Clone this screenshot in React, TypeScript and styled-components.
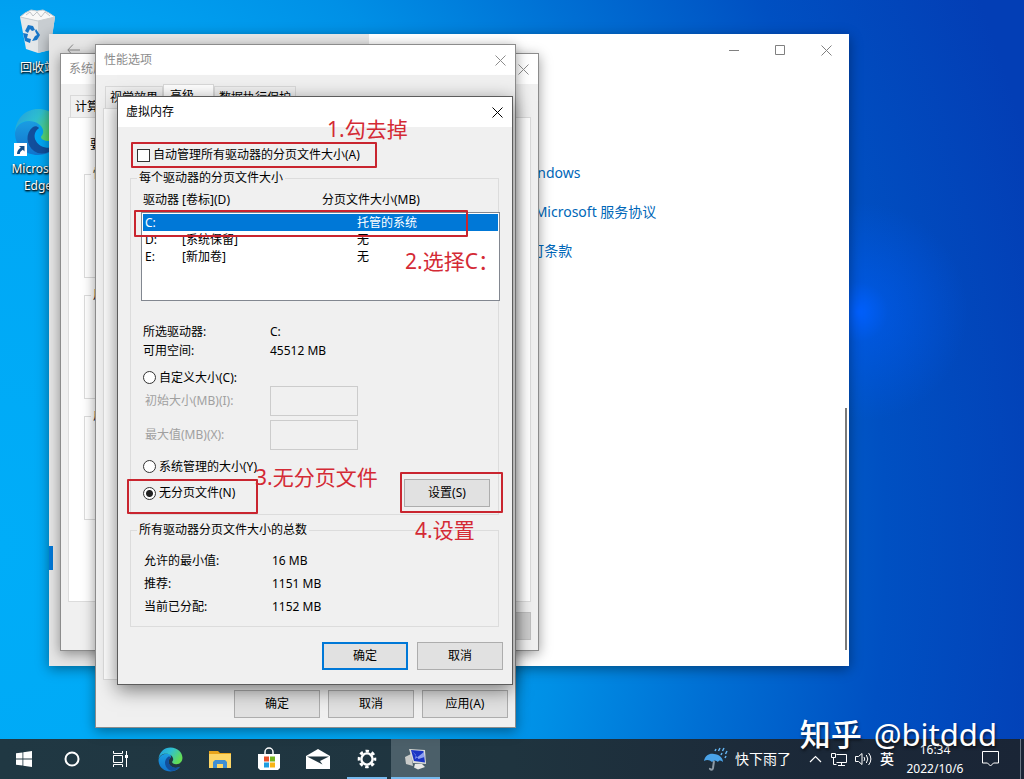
import React from "react";
import styled, { createGlobalStyle, css } from "styled-components";

const GlobalStyle = createGlobalStyle`
  * { box-sizing: border-box; }
  body {
    margin: 0;
    overflow: hidden;
    font: 12px/16px "Noto Sans", "Noto Sans CJK SC", sans-serif;
    color: #000;
  }
  button, input { font: inherit; color: inherit; }
`;

/* ---------- desktop ---------- */

const Screen = styled.div`
  display: flex;
  flex-direction: column;
  height: 100vh;
  background:
    radial-gradient(circle at 858px 312px, #0060ff 0, rgba(0, 96, 255, 0.4) 30px, rgba(0, 96, 255, 0) 110px),
    radial-gradient(ellipse 1080px 1300px at 0% 70%, #00adf8 0, #00a6f4 38%, #0090e6 52%, #0070d4 66%, #0050c2 82%, #033eb5 100%);
`;

const Desktop = styled.main`
  position: relative;
  flex: 1;
  min-height: 0;
`;

const Shortcuts = styled.nav`
  display: flex;
  flex-direction: column;
  gap: 32px;
  width: 76px;
  padding-top: 9px;
`;

const Shortcut = styled.a`
  display: flex;
  flex-direction: column;
  align-items: center;
  gap: 4px;
  color: #fff;
  line-height: 17px;
  text-align: center;
  text-decoration: none;
  text-shadow: 0 1px 2px #000, 1px 1px 2px #000;
`;

const Watermark = styled.div`
  position: absolute;
  right: 27px;
  bottom: -15px;
  z-index: 6;
  display: flex;
  gap: 12px;
  color: #fff;
  font-size: 31px;
  line-height: 40px;
  text-shadow: 1px 2px 3px rgba(0, 0, 0, 0.6);
`;

const WatermarkSite = styled.span`
  font-weight: 500;
`;

/* ---------- windows ---------- */

const Win = styled.section<{ $x: number; $y: number; $w: number; $active?: boolean }>`
  position: absolute;
  left: ${(p) => p.$x}px;
  top: ${(p) => p.$y}px;
  width: ${(p) => p.$w}px;
  border: 1px solid ${(p) => (p.$active ? "#5c5c5c" : "#8c8c8c")};
  background: #f0f0f0;
  box-shadow: ${(p) =>
    p.$active ? "0 5px 18px rgba(0, 0, 0, 0.5)" : "0 3px 12px rgba(0, 0, 0, 0.4)"};
`;

const SettingsWin = styled(Win)`
  display: flex;
  height: 632px;
  border: 0;
  background: #fff;
`;

const Sidebar = styled.aside`
  display: flex;
  flex-direction: column;
  justify-content: space-between;
  width: 320px;
  padding: 8px 0 96px;
  background: #e6e6e6;
`;

const SelectedMark = styled.div`
  width: 4px;
  height: 24px;
  background: #0078d7;
`;

const BackButton = styled.button`
  width: 48px;
  height: 16px;
  padding: 0;
  border: 0;
  background: none;
  color: #888;
  line-height: 0;
`;

const SettingsMain = styled.div`
  display: flex;
  flex: 1;
  flex-direction: column;
`;

const Controls = styled.div`
  display: flex;
  justify-content: flex-end;
`;

const ControlButton = styled.button`
  display: grid;
  place-items: center;
  width: 46px;
  height: 32px;
  padding: 0;
  border: 0;
  background: none;
  color: #808080;
`;

const SettingsBody = styled.div`
  display: flex;
  flex: 1;
  justify-content: space-between;
  align-items: flex-end;
  padding: 0 2px 16px 22px;
`;

const Links = styled.div`
  display: flex;
  flex-direction: column;
  align-self: flex-start;
  gap: 19px;
  padding-top: 97px;
  font-size: 14px;
  line-height: 20px;
`;

const TextLink = styled.a`
  color: #0067b8;
  text-decoration: none;
`;

const ScrollThumb = styled.div`
  width: 2px;
  height: 242px;
  background: #7a7a7a;
`;

const TitleBar = styled.header<{ $muted?: boolean }>`
  display: flex;
  align-items: center;
  justify-content: space-between;
  height: 30px;
  padding-left: 8px;
  background: #fff;
  color: ${(p) => (p.$muted ? "#8c8c8c" : "#000")};
`;

const Title = styled.h2`
  margin: 0;
  font-size: 12px;
  font-weight: 400;
`;

const CloseButton = styled.button`
  display: grid;
  place-items: center;
  width: 30px;
  height: 28px;
  padding: 0;
  border: 0;
  background: none;
`;

const Tabs = styled.div`
  display: flex;
  align-items: flex-end;
  height: 33px;
  padding-left: 9px;
`;

const Tab = styled.button<{ $active?: boolean }>`
  height: 22px;
  padding: 0 4px;
  border: 1px solid #d9d9d9;
  border-bottom: 0;
  background: #f0f0f0;
  white-space: nowrap;
  ${(p) =>
    p.$active &&
    css`
      height: 24px;
      padding: 0 12px 2px 6px;
      width: 51px;
      text-align: left;
      background: #fff;
    `}
`;

const TabPage = styled.div<{ $h: number }>`
  min-height: ${(p) => p.$h}px;
  margin: 0 7px;
  padding: 19px 15px 0;
  border: 1px solid #dcdcdc;
  background: #fff;
`;

const Paragraph = styled.p`
  margin: 0 0 13px;
  padding-left: 6px;
`;

const Groups = styled.div`
  display: flex;
  flex-direction: column;
  gap: 9px;
`;

const Group = styled.fieldset<{ $h?: number }>`
  min-width: 0;
  height: ${(p) => (p.$h ? p.$h + "px" : "auto")};
  margin: 0;
  padding: 0;
  border: 1px solid #dcdcdc;
`;

const Legend = styled.legend`
  margin-left: 6px;
  padding: 0 2px;
`;

const Buttons = styled.footer<{ $gap: number; $pad: string }>`
  display: flex;
  justify-content: flex-end;
  gap: ${(p) => p.$gap}px;
  padding: ${(p) => p.$pad};
`;

const Button = styled.button<{ $primary?: boolean }>`
  width: 86px;
  height: 28px;
  padding: 0;
  border: ${(p) => (p.$primary ? "2px solid #0078d7" : "1px solid #adadad")};
  background: #e1e1e1;
  &:disabled {
    border-color: #bfbfbf;
    background: #ccc;
    color: #838383;
  }
`;

/* ---------- virtual memory dialog ---------- */

const DialogBody = styled.div`
  display: flex;
  flex-direction: column;
  padding: 15px 13px 0 12px;
`;

const CheckLabel = styled.label`
  display: flex;
  align-items: center;
  gap: 3px;
  height: 26px;
  margin-bottom: 2px;
  padding-left: 7px;
`;

const CheckBox = styled.input`
  appearance: none;
  width: 13px;
  height: 13px;
  margin: 0;
  border: 1px solid #333;
  background: #fff;
`;

const Radio = styled.input`
  appearance: none;
  width: 13px;
  height: 13px;
  margin: 0;
  border: 1px solid #333;
  border-radius: 50%;
  background: #fff;
  &:checked {
    background: radial-gradient(circle, #222 3px, #fff 4px);
  }
`;

const ListHeader = styled.div`
  display: grid;
  grid-template-columns: 179px 1fr;
  padding: 6px 0 4px 12px;
`;

const ListBox = styled.div`
  height: 89px;
  margin: 0 -2px 0 10px;
  padding: 1px;
  border: 1px solid #828790;
  background: #fff;
`;

const DriveTable = styled.table`
  width: 100%;
  table-layout: fixed;
  border-collapse: collapse;
`;

const DriveRow = styled.tr<{ $selected?: boolean }>`
  height: 17px;
  background: ${(p) => (p.$selected ? "#0078d7" : "transparent")};
  color: ${(p) => (p.$selected ? "#fff" : "#000")};
`;

const DriveCell = styled.td<{ $w?: number }>`
  width: ${(p) => (p.$w ? p.$w + "px" : "auto")};
  padding: 0 0 0 2px;
`;

const Facts = styled.dl<{ $row: number; $col: number; $pad: string }>`
  display: grid;
  grid-template-columns: ${(p) => p.$col}px 1fr;
  grid-auto-rows: ${(p) => p.$row}px;
  align-items: center;
  margin: 0;
  padding: ${(p) => p.$pad};
`;

const Value = styled.dd`
  margin: 0;
`;

const Choice = styled.label`
  display: flex;
  align-items: center;
  gap: 3px;
  height: 17px;
  padding-left: 12px;
`;

const SizeFields = styled.div`
  display: grid;
  grid-template-columns: 125px 88px;
  grid-auto-rows: 30px;
  align-items: center;
  row-gap: 4px;
  padding: 0 0 8px 14px;
  color: #a0a0a0;
`;

const SizeInput = styled.input`
  width: 88px;
  height: 30px;
  border: 1px solid #ccc;
  background: #f0f0f0;
`;

const SetRow = styled.div`
  display: flex;
  align-items: center;
  justify-content: space-between;
  padding: 4px 8px 7px 0;
`;

const Total = styled(Group)`
  margin-top: 7px;
`;

/* ---------- red annotations ---------- */

const MarkBox = styled.div<{ $x: number; $y: number; $w: number; $h: number }>`
  position: absolute;
  left: ${(p) => p.$x}px;
  top: ${(p) => p.$y}px;
  width: ${(p) => p.$w}px;
  height: ${(p) => p.$h}px;
  border: 2px solid #c9252f;
  border-radius: 1px;
  pointer-events: none;
`;

const MarkText = styled.div<{ $x: number; $y: number }>`
  position: absolute;
  left: ${(p) => p.$x}px;
  top: ${(p) => p.$y}px;
  color: #d42a35;
  font-size: 21px;
  line-height: 28px;
  white-space: nowrap;
`;

/* ---------- taskbar ---------- */

const Taskbar = styled.footer`
  display: flex;
  justify-content: space-between;
  height: 40px;
  background: linear-gradient(90deg, #203843, #1f343f 50%, #1b2838 80%, #1a2536);
  color: #fff;
`;

const TaskGroup = styled.div`
  display: flex;
  align-items: stretch;
`;

const SystemButtons = styled(TaskGroup)`
  margin-right: 2px;
`;

const TaskButton = styled.button<{ $open?: boolean; $active?: boolean }>`
  display: grid;
  place-items: center;
  width: 49px;
  padding: 0;
  border: 0;
  background: ${(p) => (p.$active ? "#4b5f69" : "none")};
  ${(p) =>
    p.$open &&
    css`
      background-image: linear-gradient(#76b9ed, #76b9ed);
      background-repeat: no-repeat;
      background-position: center bottom;
      background-size: ${p.$active ? "100%" : "40px"} 2px;
    `}
  ${SystemButtons} & {
    width: 48px;
  }
`;

const Weather = styled.button`
  display: flex;
  align-items: center;
  gap: 7px;
  padding: 0 12px 0 0;
  border: 0;
  background: none;
  font-size: 14px;
`;

const TrayButton = styled.button`
  display: grid;
  place-items: center;
  width: 24px;
  padding: 0;
  border: 0;
  background: none;
  font-size: 14px;
  font-weight: 500;
`;

const Clock = styled.time`
  display: flex;
  flex-direction: column;
  justify-content: space-between;
  width: 72px;
  padding: 3px 0 2px;
  text-align: center;
`;

const ActionCenter = styled.button`
  display: grid;
  place-items: center;
  width: 50px;
  margin-right: 3px;
  padding: 0 10px 0 0;
  border: 0;
  border-right: 1px solid #6c7784;
  background: none;
`;

/* ---------- drawings ---------- */

const Cross = () => (
  <svg width="11" height="11" viewBox="0 0 11 11" stroke="currentColor" fill="none">
    <path d="M.5 .5l10 10M10.5 .5l-10 10" />
  </svg>
);

const EdgeLogo = ({ size, id }: { size: number; id: string }) => (
  <svg width={size} height={size} viewBox="0 0 48 48">
    <defs>
      <linearGradient id={id + "a"} x1="0" y1="0" x2="1" y2=".5">
        <stop offset="0" stopColor="#1f9be0" />
        <stop offset=".5" stopColor="#2fc0d0" />
        <stop offset="1" stopColor="#63dd55" />
      </linearGradient>
      <linearGradient id={id + "b"} x1="0" y1="0" x2="0" y2="1">
        <stop offset="0" stopColor="#1b9de2" />
        <stop offset="1" stopColor="#1173cc" />
      </linearGradient>
    </defs>
    <path fill={`url(#${id}b)`} d="M24 14C13 10 2 16 1 25c0 13 10 22 23 22 8 0 15-4 18-9-7 4-16 2-20-4-3-5-2-11 3-14z" />
    <path fill="#124f9c" d="M19 19c-8 6-7 18 1 24 7 5 17 2 22-5-8 4-17 1-20-5-3-5-1-10 3-13-2-2-4-2-6-1z" />
    <path fill={`url(#${id}a)`} d="M1 24C2 10 12 1 24 1c14 0 23 10 23 20 0 8-6 12-12 12-5 0-8-2-8-4 0-1 3-3 2-7-1-5-7-9-14-9-8 0-13 5-14 11z" />
  </svg>
);

const BinIcon = () => (
  <svg width="40" height="46" viewBox="0 0 40 46">
    <path d="M2 8l18 4 17-4-5 33-12 3-12-4z" fill="#e4e7e9" />
    <path d="M20 12l17-4-5 33-12 3z" fill="#c8cdd1" />
    <path d="M2 8l5-4 6-3 6 1 6-1 6 3 6 4-17 4z" fill="#f8f8f8" stroke="#c9cdd0" />
    <path d="M8 6l4-3 3 4 4-4 4 5 4-5 5 4" fill="none" stroke="#bfc4c8" />
    <g fill="#1676c8">
      <path d="M7 22l3-6 5 1 2 4-3 1-2-2-2 4z" />
      <path d="M18 20l4 6-3 5-5 1 3-5 2-1-2-4z" />
      <path d="M5 24l5 1-1 4 4 1-1 4-5-2z" />
    </g>
  </svg>
);

const EdgeShortcutArt = styled.span`
  position: relative;
  display: block;
  width: 48px;
  height: 48px;
`;

const ShortcutArrow = styled.svg`
  position: absolute;
  left: 0;
  bottom: 0;
`;

const drives = [
  { letter: "C:", label: "", size: "托管的系统", selected: true },
  { letter: "D:", label: "[系统保留]", size: "无" },
  { letter: "E:", label: "[新加卷]", size: "无" },
];

function SettingsWindow() {
  return (
    <SettingsWin $x={49} $y={34} $w={800} aria-label="设置">
      <Sidebar>
        <BackButton aria-label="返回">
          <svg width="13" height="12" viewBox="0 0 13 12" fill="none" stroke="currentColor">
            <path d="M13 6H1M6 .5L.8 6 6 11.500" />
          </svg>
        </BackButton>
        <SelectedMark />
      </Sidebar>
      <SettingsMain>
        <Controls>
          <ControlButton aria-label="最小化">
            <svg width="10" height="11" viewBox="0 0 10 11" stroke="currentColor"><path d="M0 5.500h10" /></svg>
          </ControlButton>
          <ControlButton aria-label="最大化">
            <svg width="11" height="11" viewBox="0 0 11 11" stroke="currentColor" fill="none"><path d="M.5 .5h9v9H.5z" /></svg>
          </ControlButton>
          <ControlButton aria-label="关闭"><Cross /></ControlButton>
        </Controls>
        <SettingsBody>
          <Links>
            <TextLink href="#key">更改产品密钥或升级 Windows</TextLink>
            <TextLink href="#services">阅读适用于我们服务的 Microsoft 服务协议</TextLink>
            <TextLink href="#license">阅读 Microsoft 软件许可条款</TextLink>
          </Links>
          <ScrollThumb />
        </SettingsBody>
      </SettingsMain>
    </SettingsWin>
  );
}

function SystemProperties() {
  return (
    <Win $x={60} $y={53} $w={479} aria-label="系统属性">
      <TitleBar $muted>
        <Title>系统属性</Title>
        <CloseButton aria-label="关闭"><Cross /></CloseButton>
      </TitleBar>
      <Tabs>
        <Tab>计算机名</Tab>
      </Tabs>
      <TabPage $h={485}>
        <Paragraph>要进行大多数更改，你必须作为管理员登录。</Paragraph>
        <Groups>
          <Group $h={112}><Legend>性能</Legend></Group>
          <Group $h={112}><Legend>用户配置文件</Legend></Group>
          <Group $h={112}><Legend>启动和故障恢复</Legend></Group>
        </Groups>
      </TabPage>
      <Buttons $gap={8} $pad="10px 7px">
        <Button disabled>应用</Button>
      </Buttons>
    </Win>
  );
}

function PerformanceOptions() {
  return (
    <Win $x={95} $y={44} $w={421} aria-label="性能选项">
      <TitleBar $muted>
        <Title>性能选项</Title>
        <CloseButton aria-label="关闭"><Cross /></CloseButton>
      </TitleBar>
      <Tabs>
        <Tab>视觉效果</Tab>
        <Tab $active>高级</Tab>
        <Tab>数据执行保护</Tab>
      </Tabs>
      <TabPage $h={572} />
      <Buttons $gap={8} $pad="10px 7px 9px">
        <Button>确定</Button>
        <Button>取消</Button>
        <Button>应用(A)</Button>
      </Buttons>
    </Win>
  );
}

function VirtualMemory() {
  return (
    <Win $x={117} $y={96} $w={396} $active aria-label="虚拟内存">
      <TitleBar>
        <Title>虚拟内存</Title>
        <CloseButton aria-label="关闭"><Cross /></CloseButton>
      </TitleBar>
      <DialogBody>
        <CheckLabel>
          <CheckBox type="checkbox" />
          自动管理所有驱动器的分页文件大小(A)
        </CheckLabel>
        <Group>
          <Legend>每个驱动器的分页文件大小</Legend>
          <ListHeader>
            <span>驱动器 [卷标](D)</span>
            <span>分页文件大小(MB)</span>
          </ListHeader>
          <ListBox>
            <DriveTable>
              <tbody>
                {drives.map((d) => (
                  <DriveRow key={d.letter} $selected={d.selected}>
                    <DriveCell $w={37}>{d.letter}</DriveCell>
                    <DriveCell $w={175}>{d.label}</DriveCell>
                    <DriveCell>{d.size}</DriveCell>
                  </DriveRow>
                ))}
              </tbody>
            </DriveTable>
          </ListBox>
          <Facts $row={19} $col={127} $pad="21px 0 9px 12px">
            <dt>所选驱动器:</dt>
            <Value>C:</Value>
            <dt>可用空间:</dt>
            <Value>45512 MB</Value>
          </Facts>
          <Choice>
            <Radio type="radio" name="mode" />
            自定义大小(C):
          </Choice>
          <SizeFields>
            <label htmlFor="initial">初始大小(MB)(I):</label>
            <SizeInput id="initial" disabled />
            <label htmlFor="maximum">最大值(MB)(X):</label>
            <SizeInput id="maximum" disabled />
          </SizeFields>
          <Choice>
            <Radio type="radio" name="mode" />
            系统管理的大小(Y)
          </Choice>
          <SetRow>
            <Choice>
              <Radio type="radio" name="mode" defaultChecked />
              无分页文件(N)
            </Choice>
            <Button>设置(S)</Button>
          </SetRow>
        </Group>
        <Total>
          <Legend>所有驱动器分页文件大小的总数</Legend>
          <Facts $row={23} $col={128} $pad="11px 0 8px 13px">
            <dt>允许的最小值:</dt>
            <Value>16 MB</Value>
            <dt>推荐:</dt>
            <Value>1151 MB</Value>
            <dt>当前已分配:</dt>
            <Value>1152 MB</Value>
          </Facts>
        </Total>
      </DialogBody>
      <Buttons $gap={9} $pad="15px 9px 14px">
        <Button $primary>确定</Button>
        <Button>取消</Button>
      </Buttons>
    </Win>
  );
}

export default function App() {
  return (
    <Screen>
      <GlobalStyle />
      <Desktop>
        <Shortcuts>
          <Shortcut href="#bin">
            <BinIcon />
            <span>回收站</span>
          </Shortcut>
          <Shortcut href="#edge">
            <EdgeShortcutArt>
              <EdgeLogo size={48} id="desk" />
              <ShortcutArrow width="13" height="13" viewBox="0 0 13 13">
                <path d="M0 0h13v13H0z" fill="#fff" />
                <path d="M5 3h5.500v5.500L8.800 6.800C7 8 6 9 5.800 11H3c0-3 1.500-5 3.800-6.200z" fill="#14508c" />
              </ShortcutArrow>
            </EdgeShortcutArt>
            <span>Microsoft<br />Edge</span>
          </Shortcut>
        </Shortcuts>

        <SettingsWindow />
        <SystemProperties />
        <PerformanceOptions />
        <VirtualMemory />

        <MarkBox $x={131} $y={142} $w={246} $h={26} />
        <MarkBox $x={134} $y={210} $w={334} $h={27} />
        <MarkBox $x={127} $y={479} $w={131} $h={35} />
        <MarkBox $x={400} $y={472} $w={103} $h={41} />
        <MarkText $x={327} $y={115}>1.勾去掉</MarkText>
        <MarkText $x={405} $y={247}>2.选择C：</MarkText>
        <MarkText $x={255} $y={463}>3.无分页文件</MarkText>
        <MarkText $x={415} $y={516}>4.设置</MarkText>

        <Watermark>
          <WatermarkSite>知乎</WatermarkSite>
          <span>@bitddd</span>
        </Watermark>
      </Desktop>

      <Taskbar>
        <TaskGroup>
          <SystemButtons>
            <TaskButton aria-label="开始">
              <svg width="16" height="16" viewBox="0 0 16 16" fill="#fff">
                <path d="M0 2.300L6.500 1.400v6.200H0zM7.300 1.300L16 0v7.600H7.300zM0 8.400h6.500v6.200L0 13.700zM7.300 8.400H16V16l-8.700-1.300z" />
              </svg>
            </TaskButton>
            <TaskButton aria-label="搜索">
              <svg width="16" height="16" viewBox="0 0 16 16" fill="none" stroke="#fff" strokeWidth="2"><circle cx="8" cy="8" r="6.500" /></svg>
            </TaskButton>
            <TaskButton aria-label="任务视图">
              <svg width="17" height="16" viewBox="0 0 17 16" fill="none" stroke="#fff">
                <path d="M1.500 0v2.500h9V0M1.500 16v-2.500h9V16M1.500 4.500h9v7h-9zM14.500 0v16" />
                <path d="M13 4h3v3h-3z" fill="#fff" stroke="none" />
              </svg>
            </TaskButton>
          </SystemButtons>
          <TaskButton aria-label="Edge"><EdgeLogo size={25} id="bar" /></TaskButton>
          <TaskButton aria-label="文件资源管理器">
            <svg width="22" height="19" viewBox="0 0 22 19">
              <path d="M0 1h9l2 2h11v15H0z" fill="#e8a51c" />
              <path d="M0 4h22v14H0z" fill="#fcd667" />
              <path d="M4 18v-6l2-2h10l2 2v6h-4v-4H8v4z" fill="#3f8fd4" />
            </svg>
          </TaskButton>
          <TaskButton aria-label="Microsoft Store">
            <svg width="24" height="24" viewBox="0 0 24 24">
              <path d="M8 8V5a4 4 0 0 1 8 0v3" fill="none" stroke="#fff" strokeWidth="1.500" />
              <path d="M1 7h22v14l-2 2H3l-2-2z" fill="#fff" />
              <path d="M7 9.500h5v5H7z" fill="#e8502a" /><path d="M13 9.500h5v5h-5z" fill="#74b41e" />
              <path d="M7 15.500h5v5H7z" fill="#1f9de0" /><path d="M13 15.500h5v5h-5z" fill="#f8b516" />
            </svg>
          </TaskButton>
          <TaskButton aria-label="邮件">
            <svg width="24" height="20" viewBox="0 0 24 20">
              <path d="M0 7l12-7 12 7v13H0z" fill="#fff" />
              <path d="M1 7.500h22l-9 4.500 2.500 3.500z" fill="#20353f" />
            </svg>
          </TaskButton>
          <TaskButton $open aria-label="设置">
            <svg width="20" height="20" viewBox="0 0 20 20" fill="none" stroke="#fff">
              <circle cx="10" cy="10" r="5.600" strokeWidth="2.400" />
              <circle cx="10" cy="10" r="7.900" strokeWidth="2.800" strokeDasharray="3.400 2.805" strokeDashoffset="1.700" />
            </svg>
          </TaskButton>
          <TaskButton $open $active aria-label="系统属性">
            <svg width="24" height="22" viewBox="0 0 24 22">
              <path d="M1 9l6-3 2 12-7-2z" fill="#c9cbc9" />
              <path d="M5 1l16 1 1 14-13-1z" fill="#dcdcd8" />
              <path d="M7 2l12.500 1 1.500 11.500L10 13z" fill="#1b35c4" />
              <path d="M8 3l4 4-1 4 9-7 .5 5-6 2z" fill="#8ea0f0" />
              <path d="M11 16h7l3 3-7 2.500-4-2z" fill="#e9e9e6" />
            </svg>
          </TaskButton>
        </TaskGroup>

        <TaskGroup>
          <Weather>
            <svg width="25" height="24" viewBox="0 0 25 24" fill="none">
              <path d="M1 14C2 8 7 6 11 7c5 0 9 4 9 8-2-2-4-2-5 0-2-2-4-2-6 0-2-2-5-3-8-1z" fill="#4aa3e8" />
              <path d="M11 14l-1 7c-.5 2.500-3.500 2-3 0" stroke="#8d9aa6" strokeWidth="2" />
              <path d="M13 2l-1 2M17 1l-1.500 3M21 1l-1.500 3M24 4l-1.500 3M19 6l-1 2M23 9l-1 2" stroke="#64b5f2" strokeWidth="1.500" />
            </svg>
            快下雨了
          </Weather>
          <TrayButton aria-label="显示隐藏的图标">
            <svg width="13" height="8" viewBox="0 0 13 8" fill="none" stroke="#fff" strokeWidth="1.200"><path d="M1 7l5.500-5.500L12 7" /></svg>
          </TrayButton>
          <TrayButton aria-label="网络">
            <svg width="16" height="15" viewBox="0 0 16 15" fill="none" stroke="#fff">
              <path d="M5.500 2.500h10v8h-10M10.500 10.500v3M7 13.500h7M.5 1.500h4v4h-4zM2.500 5.500v7h3" />
            </svg>
          </TrayButton>
          <TrayButton aria-label="音量">
            <svg width="17" height="14" viewBox="0 0 17 14" fill="none" stroke="#fff">
              <path d="M.5 4.500h3L7 1.500v11L3.500 9.500h-3zM9 5q1.500 2 0 4M11.300 3q3 4 0 8M13.600 1q4.600 6 0 12" />
            </svg>
          </TrayButton>
          <TrayButton aria-label="输入法">英</TrayButton>
          <Clock>
            <span>16:34</span>
            <span>2022/10/6</span>
          </Clock>
          <ActionCenter aria-label="通知">
            <svg width="17" height="16" viewBox="0 0 17 16" fill="none" stroke="#fff"><path d="M.5 .5h16v11.500h-5l-3 3-3-3h-5z" /></svg>
          </ActionCenter>
        </TaskGroup>
      </Taskbar>
    </Screen>
  );
}
